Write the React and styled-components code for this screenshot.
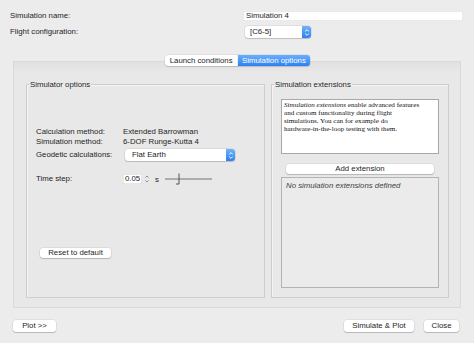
import React from 'react';
import styled, { createGlobalStyle } from 'styled-components';

const Global = createGlobalStyle`
  html, body {
    margin: 0;
    padding: 0;
    background: #ececec;
  }
  body {
    font-family: "Liberation Sans", Arial, sans-serif;
    font-size: 7.8px;
    color: #1e1e1e;
  }
`;

// Window
const Window = styled.div`
  width: 474px;
  height: 343px;
  box-sizing: border-box;
  display: flex;
  flex-direction: column;
  background: #ececec;
`;

// Top form
const Form = styled.div`
  display: grid;
  grid-template-columns: 233px 1fr;
  row-gap: 5px;
  align-items: center;
  padding: 11px 11px 0 10px;
`;

const Label = styled.div`
  line-height: 10px;
  white-space: nowrap;
`;

const TextField = styled.div`
  height: 10px;
  line-height: 10px;
  background: #fff;
  padding-left: 3px;
  box-shadow: inset 0 0 0 0.5px #d6d6d6;
`;

const Select = styled.div`
  box-sizing: border-box;
  width: ${p => p.$w}px;
  height: 12px;
  line-height: 12px;
  margin-left: ${p => p.$ml || 0}px;
  margin-top: ${p => p.$mt || 0}px;
  padding-left: ${p => p.$pl || 4}px;
  background: #fff;
  border-radius: 3px;
  box-shadow: 0 0 0 0.5px rgba(0, 0, 0, 0.12), 0 1px 1px rgba(0, 0, 0, 0.15);
  display: flex;
  align-items: center;
`;

const Stepper = styled.span`
  margin-left: auto;
  width: 9px;
  height: 12px;
  border-radius: 0 3px 3px 0;
  background: linear-gradient(#6db3fb, #2e7ff0);
  display: flex;
  align-items: center;
  justify-content: center;
`;

const Chevrons = () => (
  <svg width="6" height="9" viewBox="0 0 6 9">
    <path d="M1.2 3.4 L3 1.6 L4.8 3.4 M1.2 5.6 L3 7.4 L4.8 5.6" stroke="#fff" strokeWidth="1" fill="none" />
  </svg>
);

// Tabs
const TabRow = styled.div`
  display: flex;
  justify-content: center;
  margin: 17px 0 -5px;
  position: relative;
  z-index: 1;
  padding-left: 1px;
`;

const Tab = styled.div`
  height: 11px;
  line-height: 11px;
  padding: 0 ${p => p.$px}px;
  background: ${p => (p.$active ? 'linear-gradient(#69b0fa, #2f80f1)' : '#fff')};
  color: ${p => (p.$active ? '#fff' : '#1e1e1e')};
  border-radius: ${p => (p.$active ? '0 3px 3px 0' : '3px 0 0 3px')};
  box-shadow: 0 0 0 0.5px rgba(0, 0, 0, 0.12), 0 1px 1px rgba(0, 0, 0, 0.12);
  white-space: nowrap;
`;

const Panel = styled.div`
  margin: 0 13px;
  height: 247px;
  box-sizing: border-box;
  border: 1px solid #dadada;
  background: linear-gradient(#e1e1e1 0, #e6e6e6 8px, #e8e8e8 12px, #e8e8e8 100%);
  padding: 18px 11px 9px 12px;
  display: grid;
  grid-template-columns: 239px 1fr;
  column-gap: 6px;
`;

const Group = styled.fieldset`
  margin: 0;
  min-width: 0;
  border: 1px solid #cdcdcd;
  box-shadow: inset 1px 1px 0 #f4f4f4;
  padding: 0 9px;
`;

const Legend = styled.legend`
  padding: 0 1px;
  margin-left: -7px;
  line-height: 9px;
`;

// Simulator options
const OptGrid = styled.div`
  display: grid;
  grid-template-columns: 87px 1fr;
  align-items: center;
  margin-top: 38px;
`;

const Cell = styled.div`
  line-height: 10px;
  margin-top: ${p => p.$mt || 0}px;
  white-space: nowrap;
`;

const TimeStep = styled.div`
  display: flex;
  align-items: center;
  margin-top: 11px;
`;

const Spin = styled.div`
  width: 17px;
  height: 10px;
  line-height: 10px;
  padding-left: 2px;
  background: #fff;
  box-shadow: inset 0 0 0 0.5px #d0d0d0;
`;

const SpinArrows = () => (
  <svg width="6" height="10" viewBox="0 0 6 10" style={{ marginLeft: 2 }}>
    <path d="M1.5 3.5 L3 2 L4.5 3.5 M1.5 6.5 L3 8 L4.5 6.5" stroke="#777" strokeWidth="0.8" fill="none" />
  </svg>
);

const Unit = styled.span`
  margin: 0 6px 0 5px;
`;

const Slider = () => (
  <svg width="48" height="14" viewBox="0 0 48 14">
    <line x1="0" y1="7" x2="47" y2="7" stroke="#555" strokeWidth="0.8" />
    <path d="M14 1.5 V12 H11" stroke="#444" strokeWidth="0.9" fill="none" />
  </svg>
);

const Button = styled.div`
  height: ${p => p.$h || 12}px;
  line-height: ${p => p.$h || 12}px;
  box-sizing: border-box;
  width: ${p => (p.$w ? `${p.$w}px` : 'auto')};
  text-align: center;
  background: #fff;
  border-radius: 3px;
  box-shadow: 0 0 0 0.5px rgba(0, 0, 0, 0.1), 0 1px 1px rgba(0, 0, 0, 0.18);
  white-space: nowrap;
`;

const ResetWrap = styled.div`
  margin: 62px 0 0 4px;
`;

// Simulation extensions
const InfoBox = styled.div`
  height: 55px;
  box-sizing: border-box;
  margin-top: 10px;
  border: 1px solid #a9a9a9;
  background: #fff;
  padding: 1px 2px;
  font-family: "Liberation Serif", "Times New Roman", serif;
  font-size: 7.1px;
  line-height: 8px;
  color: #111;
  white-space: nowrap;
  overflow: hidden;
`;

const AddWrap = styled.div`
  margin: 10px 5px 3px;
`;

const ListBox = styled.div`
  height: 111px;
  box-sizing: border-box;
  border: 1px solid #b4b4b4;
  background: #ebebeb;
  padding: 3px 4px;
  font-style: italic;
  color: #444;
  line-height: 10px;
`;

// Bottom bar
const Footer = styled.div`
  display: flex;
  align-items: center;
  gap: 10px;
  padding: 12px 15px 0 13px;
`;

const Spacer = styled.div`
  flex: 1;
`;

export default function App() {
  return (
    <Window>
      <Global />
      <Form>
        <Label>Simulation name:</Label>
        <TextField>Simulation 4</TextField>
        <Label>Flight configuration:</Label>
        <Select $w={66} $ml={2} $pl={5}>
          [C6-5]
          <Stepper><Chevrons /></Stepper>
        </Select>
      </Form>

      <TabRow>
        <Tab $px={5}>Launch conditions</Tab>
        <Tab $active $px={4.5}>Simulation options</Tab>
      </TabRow>

      <Panel>
        <Group>
          <Legend>Simulator options</Legend>
          <OptGrid>
            <Cell>Calculation method:</Cell>
            <Cell>Extended Barrowman</Cell>
            <Cell>Simulation method:</Cell>
            <Cell>6-DOF Runge-Kutta 4</Cell>
            <Cell $mt={2}>Geodetic calculations:</Cell>
            <Select $w={110} $ml={2} $pl={7} $mt={2}>
              Flat Earth
              <Stepper><Chevrons /></Stepper>
            </Select>
            <Cell $mt={11}>Time step:</Cell>
            <TimeStep>
              <Spin>0.05</Spin>
              <SpinArrows />
              <Unit>s</Unit>
              <Slider />
            </TimeStep>
          </OptGrid>
          <ResetWrap>
            <Button $w={71} $h={10}>Reset to default</Button>
          </ResetWrap>
        </Group>

        <Group>
          <Legend>Simulation extensions</Legend>
          <InfoBox>
            <i>Simulation extensions</i> enable advanced features<br />
            and custom functionality during flight<br />
            simulations. You can for example do<br />
            hardware-in-the-loop testing with them.
          </InfoBox>
          <AddWrap>
            <Button $h={10}>Add extension</Button>
          </AddWrap>
          <ListBox>No simulation extensions defined</ListBox>
        </Group>
      </Panel>

      <Footer>
        <Button $w={43}>Plot &gt;&gt;</Button>
        <Spacer />
        <Button $w={70}>Simulate &amp; Plot</Button>
        <Button $w={35}>Close</Button>
      </Footer>
    </Window>
  );
}
